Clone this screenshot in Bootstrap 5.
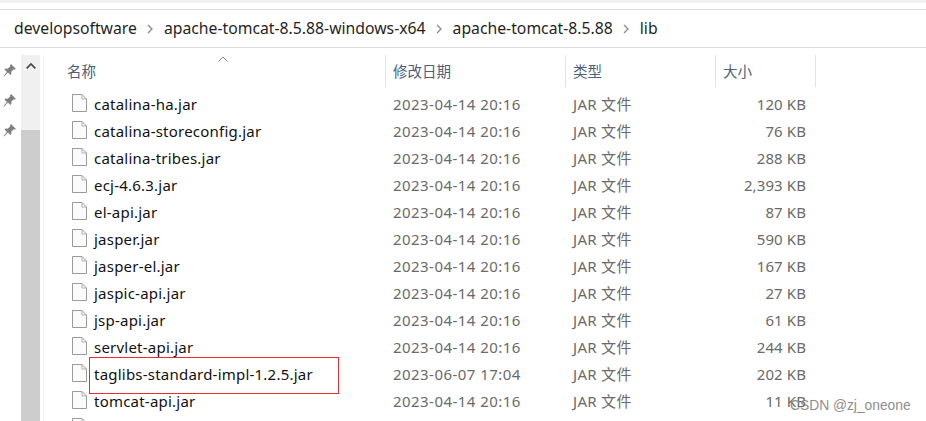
<!DOCTYPE html>
<html lang="zh">
<head>
<meta charset="utf-8">
<title>lib</title>
<link href="https://cdn.jsdelivr.net/npm/bootstrap@5.3.0/dist/css/bootstrap.min.css" rel="stylesheet">
<style>
html,body{height:421px;overflow:hidden;background:#fff}
body{font-family:"Noto Sans","Noto Sans CJK SC",sans-serif;font-size:15px;color:#1a1a1a}
.strip-top{height:3px;background:#f0f0f0}
.strip-gap{height:6px;background:#fff}
.crumbs{height:39px;border-top:1px solid #dcdcdc;border-bottom:1px solid #dcdcdc;padding-left:14px;font-size:15.75px;color:#1f1f1f}
.crumb-sep{width:27px;display:flex;justify-content:center;flex:none}
.sidebar{width:21px;flex:none;padding:16px 0 0 3px}
.pin{display:block;width:13px;height:13px;margin-bottom:17px}
.scroller{width:19px;flex:none;margin-top:7px;height:366px;background:#f0f0f0}
.scroll-up{height:75px}
.scroll-thumb{height:291px;background:#cdcdcd}
.listing{flex:1;margin-left:3px;border-left:1px solid #f3f3f3;margin-top:7px;min-width:0}
.head-row{height:32px;margin-bottom:4px;margin-left:-1px}
.cell-name{width:342px;flex:none;padding-left:24px}
.cell-date{width:180px;flex:none;padding-left:7px}
.cell-type{width:150px;flex:none;padding-left:7px}
.cell-size{width:100px;flex:none;padding-left:7px}
.head-row>div{position:relative;height:32px;line-height:31px;color:#4c607a;font-size:14.5px;font-family:"Noto Sans CJK SC",sans-serif}
.cell-date,.cell-type,.cell-size,.head-end{border-left:1px solid #e3e3e3}
.file-row .cell-date,.file-row .cell-type,.file-row .cell-size{border-left:1px solid transparent}
.head-end{width:1px;flex:none}
.sort-mark{position:absolute;left:175px;top:1px;width:10px;height:6px}
.file-row{height:27px;line-height:26px;position:relative;margin-left:-1px}
.file-row .cell-name{display:flex;align-items:flex-start;height:26px;padding-left:29px;color:#111;letter-spacing:.22px}
.file-row .cell-date,.file-row .cell-type{color:#6a6a6a}
.file-row .cell-date{letter-spacing:.45px}
.file-row .cell-type{letter-spacing:.3px}
.file-row .cell-size{color:#6a6a6a;text-align:right;padding-right:9px;letter-spacing:.1px}
.file-glyph{width:15px;height:18px;flex:none;margin:3px 7px 0 0}
.mark-box{position:absolute;left:46px;top:-4px;width:250px;height:37px;border:1px solid #ee2a2a}
.stamp{position:absolute;left:790px;top:396px;font-family:"Liberation Sans",sans-serif;font-size:13.8px;color:#8e8e8e;white-space:nowrap}
</style>
</head>
<body>
<div class="strip-top"></div>
<div class="strip-gap"></div>
<div class="crumbs d-flex align-items-center">
  <span>developsoftware</span>
  <span class="crumb-sep"><svg width="6" height="10" viewBox="0 0 6 10"><path d="M1 1l4 4-4 4" fill="none" stroke="#8a8a8a" stroke-width="1.3"/></svg></span>
  <span>apache-tomcat-8.5.88-windows-x64</span>
  <span class="crumb-sep"><svg width="6" height="10" viewBox="0 0 6 10"><path d="M1 1l4 4-4 4" fill="none" stroke="#8a8a8a" stroke-width="1.3"/></svg></span>
  <span>apache-tomcat-8.5.88</span>
  <span class="crumb-sep"><svg width="6" height="10" viewBox="0 0 6 10"><path d="M1 1l4 4-4 4" fill="none" stroke="#8a8a8a" stroke-width="1.3"/></svg></span>
  <span>lib</span>
</div>
<div class="d-flex">
  <div class="sidebar">
    <svg class="pin" viewBox="0 0 13 13"><path d="M8 0l5 5-1.2.6-1-.4-2.6 2.6.2 2.2-1 1-2.4-2.500L1 12.400.5 12l3.400-4L1.500 5.600l1-1 2.200.2L7.300 2.200 7 1.200z" fill="#7f7f7f"/></svg>
    <svg class="pin" viewBox="0 0 13 13"><path d="M8 0l5 5-1.2.6-1-.4-2.6 2.6.2 2.2-1 1-2.4-2.500L1 12.400.5 12l3.400-4L1.500 5.600l1-1 2.200.2L7.300 2.200 7 1.200z" fill="#7f7f7f"/></svg>
    <svg class="pin" viewBox="0 0 13 13"><path d="M8 0l5 5-1.2.6-1-.4-2.6 2.6.2 2.2-1 1-2.4-2.500L1 12.400.5 12l3.400-4L1.500 5.600l1-1 2.200.2L7.300 2.200 7 1.200z" fill="#7f7f7f"/></svg>
  </div>
  <div class="scroller">
    <div class="scroll-up d-flex justify-content-center pt-2"><svg width="10" height="6" viewBox="0 0 10 6"><path d="M.7 5.300L5 1l4.300 4.300" fill="none" stroke="#444" stroke-width="1.700"/></svg></div>
    <div class="scroll-thumb"></div>
  </div>
  <div class="listing">
    <div class="head-row d-flex">
      <div class="cell-name">名称<svg class="sort-mark" viewBox="0 0 10 6"><path d="M.5 5.500L5 1l4.500 4.500" fill="none" stroke="#8a8a8a"/></svg></div>
      <div class="cell-date">修改日期</div>
      <div class="cell-type">类型</div>
      <div class="cell-size">大小</div>
      <div class="head-end"></div>
    </div>
    <div id="rows"></div>
  </div>
</div>
<div class="stamp">CSDN @zj_oneone</div>
<script>
var data=[["catalina-ha.jar","2023-04-14 20:16","120 KB"],["catalina-storeconfig.jar","2023-04-14 20:16","76 KB"],["catalina-tribes.jar","2023-04-14 20:16","288 KB"],["ecj-4.6.3.jar","2023-04-14 20:16","2,393 KB"],["el-api.jar","2023-04-14 20:16","87 KB"],["jasper.jar","2023-04-14 20:16","590 KB"],["jasper-el.jar","2023-04-14 20:16","167 KB"],["jaspic-api.jar","2023-04-14 20:16","27 KB"],["jsp-api.jar","2023-04-14 20:16","61 KB"],["servlet-api.jar","2023-04-14 20:16","244 KB"],["taglibs-standard-impl-1.2.5.jar","2023-06-07 17:04","202 KB"],["tomcat-api.jar","2023-04-14 20:16","11 KB"],["","",""]];
var glyph='<svg class="file-glyph" viewBox="0 0 15 18"><path d="M.5.500h9.500l4.500 4.500v12.500h-14z" fill="#fbfbfb" stroke="#9a9a9a"/><path d="M10 .5v4.500h4.500" fill="none" stroke="#b0b0b0"/></svg>';
document.getElementById('rows').innerHTML=data.map(function(d){
  return '<div class="file-row d-flex"><div class="cell-name">'+glyph+'<span>'+d[0]+'</span></div><div class="cell-date">'+d[1]+'</div><div class="cell-type">'+(d[0]?'JAR 文件':'')+'</div><div class="cell-size">'+d[2]+'</div>'+(d[1]==='2023-06-07 17:04'?'<div class="mark-box"></div>':'')+'</div>';
}).join('');
</script>
<script src="https://cdn.jsdelivr.net/npm/bootstrap@5.3.0/dist/js/bootstrap.bundle.min.js"></script>
</body>
</html>
